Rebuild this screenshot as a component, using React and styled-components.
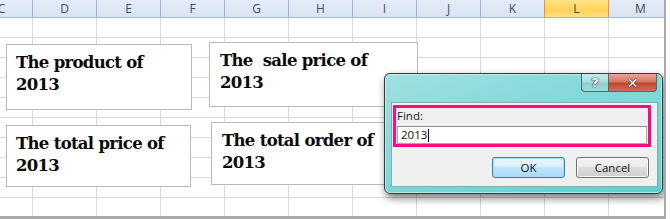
import React from "react";
import styled, { createGlobalStyle } from "styled-components";

const Global = createGlobalStyle`
  html, body { margin: 0; padding: 0; background: #ffffff; }
  #root { width: 670px; height: 219px; overflow: hidden; }
`;

const COLS = ["C", "D", "E", "F", "G", "H", "I", "J", "K", "L", "M"];
const ROWS = 10;

const Frame = styled.div`
  position: relative;
  width: 664px;
  height: 216px;
  overflow: hidden;
  border-right: 2px solid #a9a9a9;
  border-bottom: 3px solid #a9a9a9;
  background: #fff;
`;

const Sheet = styled.div`
  margin-left: -29px;
  width: 720px;
  display: flex;
  flex-direction: column;
`;

const HeaderRow = styled.div`
  display: grid;
  grid-template-columns: 62px repeat(${COLS.length - 1}, 64px);
  height: 18px;
  border-bottom: 1px solid #9eb6ce;
  box-sizing: border-box;
  background: linear-gradient(#e4ecf7, #d9e4f2);
`;

const HeaderCell = styled.div`
  box-sizing: border-box;
  border-right: 1px solid ${(p) => (p.$active ? "#f29436" : "#9eb6ce")};
  border-left: ${(p) => (p.$active ? "1px solid #f29436" : "none")};
  margin-left: ${(p) => (p.$active ? "-1px" : "0")};
  background: ${(p) =>
    p.$active ? "linear-gradient(#ffe38c, #ffd454 60%, #fbe08a)" : "transparent"};
  display: flex;
  align-items: center;
  justify-content: center;
  font-family: "Open Sans", "Noto Sans", sans-serif;
  font-size: 12px;
  color: ${(p) => (p.$active ? "#444a36" : "#3c4b66")};
  line-height: 1;
`;

const Body = styled.div`
  display: grid;
  grid-template-columns: 62px repeat(${COLS.length - 1}, 64px);
  grid-auto-rows: 20px;
`;

const Cell = styled.div`
  box-sizing: border-box;
  border-right: 1px solid #d9d9d9;
  border-bottom: 1px solid #d9d9d9;
`;

const TextBox = styled.div`
  position: absolute;
  left: ${(p) => p.$x}px;
  top: ${(p) => p.$y}px;
  width: ${(p) => p.$w}px;
  height: ${(p) => p.$h}px;
  box-sizing: border-box;
  border: 1px solid #b9b9b9;
  background: #fff;
  padding: ${(p) => p.$pt}px 0 0 ${(p) => p.$pl}px;
  font-family: "DejaVu Serif", "Liberation Serif", serif;
  font-weight: bold;
  font-size: 16.5px;
  letter-spacing: -0.7px;
  line-height: 22px;
  color: #0a0a0a;
  white-space: pre;
`;

const Dialog = styled.div`
  position: absolute;
  left: 384px;
  top: 73px;
  width: 279px;
  height: 121px;
  box-sizing: border-box;
  border: 1px solid #2e3d3f;
  border-radius: 6px;
  background: linear-gradient(160deg, #a0e0e0 0%, #88dada 35%, #78d7d6 60%, #5ed1d0 100%);
  box-shadow: 2px 4px 8px rgba(0, 0, 0, 0.55), inset 0 0 0 1px rgba(255, 255, 255, 0.45);
  display: flex;
  flex-direction: column;
`;

const TitleBar = styled.div`
  height: 28px;
  display: flex;
  justify-content: flex-end;
  align-items: flex-start;
  padding-right: 5px;
`;

const CaptionButton = styled.div`
  width: ${(p) => p.$w}px;
  height: 18px;
  box-sizing: border-box;
  border: 1px solid #4a6a6c;
  border-top: none;
  border-left: ${(p) => (p.$first ? "1px solid #4a6a6c" : "none")};
  border-radius: ${(p) => (p.$first ? "0 0 0 4px" : "0 0 4px 0")};
  background: ${(p) =>
    p.$red
      ? "linear-gradient(#e6a89a, #d6785f 45%, #c2452a 55%, #d0705a)"
      : "linear-gradient(#c4ecec, #a7dede 45%, #88d0d0 55%, #a2dcdc)"};
  display: flex;
  align-items: center;
  justify-content: center;
  font-family: "DejaVu Sans", sans-serif;
  font-weight: bold;
  font-size: ${(p) => (p.$red ? 14 : 13)}px;
  color: #ffffff;
  text-shadow: 0 0 1px #222, 0 0 1px #222, 0 0 1px #222;
`;

const Client = styled.div`
  flex: 1;
  margin: 0 4px 6px 6px;
  box-sizing: border-box;
  border: 1px solid #8aa9a9;
  background: #f0f0f0;
  display: flex;
  flex-direction: column;
  padding: 2px 6px 0 1px;
`;

const FindBox = styled.div`
  box-sizing: border-box;
  height: 42px;
  border: 3px solid #ff0a84;
  padding: 0 0 0 1px;
  display: flex;
  flex-direction: column;
`;

const Label = styled.div`
  font-family: "Open Sans", "Noto Sans", sans-serif;
  font-size: 11.5px;
  line-height: 16px;
  color: #1a1a1a;
  height: 18px;
`;

const Input = styled.div`
  height: 18px;
  width: 250px;
  box-sizing: border-box;
  border: 1px solid #a8a8a8;
  border-top-color: #8c8c8c;
  background: #fff;
  font-family: "Open Sans", "Noto Sans", sans-serif;
  font-size: 11.5px;
  line-height: 16px;
  color: #111;
  padding-left: 3px;
  display: flex;
  align-items: center;
`;

const Caret = styled.span`
  display: inline-block;
  width: 1px;
  height: 13px;
  background: #000;
  margin-left: 1px;
`;

const ButtonRow = styled.div`
  display: flex;
  justify-content: flex-end;
  gap: 11px;
  margin-top: 10px;
  padding-right: 2px;
`;

const Button = styled.div`
  width: 73px;
  height: 21px;
  box-sizing: border-box;
  border: 1px solid ${(p) => (p.$default ? "#3c7fb1" : "#707070")};
  border-radius: 3px;
  background: ${(p) =>
    p.$default
      ? "linear-gradient(#eaf6fd, #d9f0fc 50%, #bee6fd 50%, #a7d9f5)"
      : "linear-gradient(#f2f2f2, #ebebeb 50%, #dddddd 50%, #cfcfcf)"};
  box-shadow: ${(p) => (p.$default ? "inset 0 0 0 1px #a6ddf7" : "inset 0 0 0 1px #fafafa")};
  display: flex;
  align-items: center;
  justify-content: center;
  font-family: "Open Sans", "Noto Sans", sans-serif;
  font-size: 11.5px;
  color: #111;
`;

const boxes = [
  { x: 6, y: 44, w: 186, h: 66, pt: 7, pl: 9, lines: ["The product of", "2013"] },
  { x: 209, y: 42, w: 209, h: 65, pt: 7, pl: 10, lines: ["The  sale price of", "2013"] },
  { x: 6, y: 125, w: 185, h: 62, pt: 7, pl: 9, lines: ["The total price of", "2013"] },
  { x: 211, y: 122, w: 209, h: 63, pt: 7, pl: 10, lines: ["The total order of", "2013"] },
];

export default function App() {
  return (
    <>
      <Global />
      <Frame>
        <Sheet>
          <HeaderRow>
            {COLS.map((c) => (
              <HeaderCell key={c} $active={c === "L"}>
                {c}
              </HeaderCell>
            ))}
          </HeaderRow>
          <Body>
            {Array.from({ length: ROWS * COLS.length }).map((_, i) => (
              <Cell key={i} />
            ))}
          </Body>
        </Sheet>

        {boxes.map((b, i) => (
          <TextBox key={i} $x={b.x} $y={b.y} $w={b.w} $h={b.h} $pt={b.pt} $pl={b.pl}>
            {b.lines.join("\n")}
          </TextBox>
        ))}

        <Dialog>
          <TitleBar>
            <CaptionButton $w={28} $first>?</CaptionButton>
            <CaptionButton $w={48} $red>✕</CaptionButton>
          </TitleBar>
          <Client>
            <FindBox>
              <Label>Find:</Label>
              <Input>
                2013
                <Caret />
              </Input>
            </FindBox>
            <ButtonRow>
              <Button $default>OK</Button>
              <Button>Cancel</Button>
            </ButtonRow>
          </Client>
        </Dialog>
      </Frame>
    </>
  );
}
